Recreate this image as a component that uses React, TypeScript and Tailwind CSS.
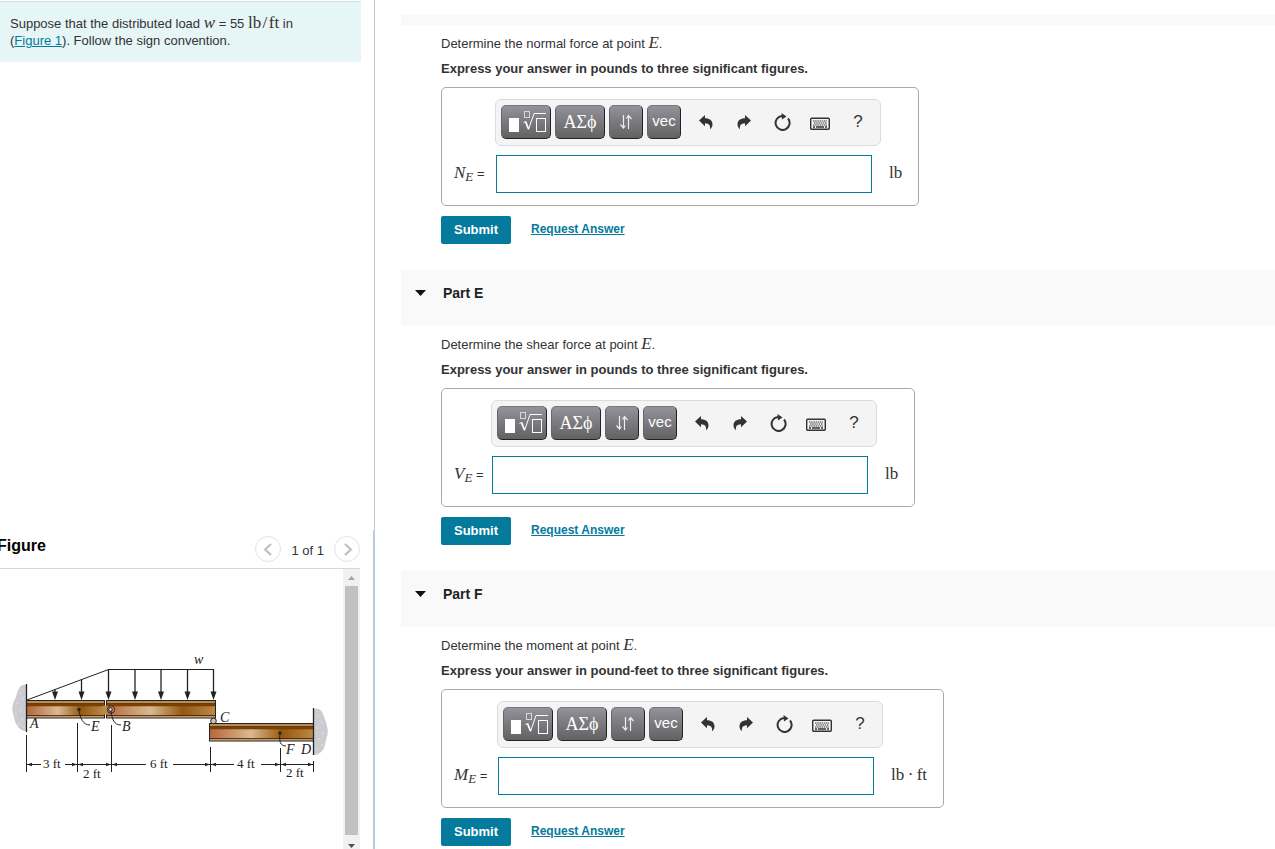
import { useState } from 'react';
import type { ReactNode } from 'react';

interface Part {
  id: string;
  title: string;
  quantity: string;
  units: string;
  symbol: string;
  unit: string;
  labelWidth: string;
}

const PARTS: Part[] = [
  {
    id: 'd',
    title: '',
    quantity: 'normal force',
    units: 'pounds',
    symbol: 'N',
    unit: 'lb',
    labelWidth: 'w-[41px]',
  },
  {
    id: 'e',
    title: 'Part E',
    quantity: 'shear force',
    units: 'pounds',
    symbol: 'V',
    unit: 'lb',
    labelWidth: 'w-[37px]',
  },
  {
    id: 'f',
    title: 'Part F',
    quantity: 'moment',
    units: 'pound-feet',
    symbol: 'M',
    unit: 'lb\u2009·\u2009ft',
    labelWidth: 'w-[43px]',
  },
];

export default function App() {
  return (
    <div className="flex h-screen overflow-hidden bg-white font-['Liberation_Sans',Arial,sans-serif] text-[13px] text-[#333]">
      <aside className="flex w-[375px] shrink-0 flex-col">
        <div className="flex-1 border-r border-[#b9cbdc] pt-px">
          <ProblemStatement />
        </div>
        <FigurePanel />
      </aside>
      <main className="min-w-0 flex-1 pt-[15px] pl-[26px]">
        {PARTS.map((p) => (
          <PartSection key={p.id} part={p} />
        ))}
      </main>
    </div>
  );
}

function MathText({ children }: { children: ReactNode }) {
  return <span className="font-['Liberation_Serif',serif] text-[17px] leading-none">{children}</span>;
}

function ProblemStatement() {
  return (
    <div className="mr-[13px] border-t border-[#d5dfe0] bg-[#e6f5f6] px-[10px] pt-[12px] pb-[13px] leading-[17px]">
      Suppose that the distributed load{' '}
      <MathText>
        <i>w</i>
      </MathText>{' '}
      = 55 <MathText>lb{'\u200a/\u200a'}ft</MathText> in
      <br />(
      <a href="#figure" className="text-[#047a9c] underline">
        Figure 1
      </a>
      ). Follow the sign convention.
    </div>
  );
}

function FigurePanel() {
  return (
    <section
      id="figure"
      className="flex h-[319px] shrink-0 flex-col border-r-2 border-[#b9cbdc] pr-[13px]"
    >
      <header className="flex h-[39px] shrink-0 items-center justify-between border-b border-[#d9d9d9]">
        <h2 className="-ml-[3px] pb-[7px] text-[16px] font-bold text-black">Figure</h2>
        <div className="flex items-center gap-[10px] text-[13px]">
          <PagerButton label="Previous figure" d="M16 8l-6 5.500 6 5.500" />
          <span className="pt-[3px]">1 of 1</span>
          <PagerButton label="Next figure" d="M11 8l6 5.500-6 5.500" />
        </div>
      </header>
      <div className="flex min-h-0 flex-1">
        <div className="min-w-0 flex-1 overflow-hidden">
          <BeamDiagram />
        </div>
        <div className="flex w-[17px] flex-col items-center bg-[#f1f1f1]">
          <svg className="h-[17px] w-[17px] shrink-0" viewBox="0 0 17 17" aria-hidden="true">
            <path d="M5 11h7L8.500 7z" fill="#a3a3a3" />
          </svg>
          <div className="w-[13px] flex-1 bg-[#c1c1c1]" />
          <svg className="h-[14px] w-[17px] shrink-0" viewBox="0 0 17 14" aria-hidden="true">
            <path d="M5 9h7l-3.500 4z" fill="#505050" />
          </svg>
        </div>
      </div>
    </section>
  );
}

function PagerButton({ label, d }: { label: string; d: string }) {
  return (
    <button aria-label={label} className="h-[26px] w-[26px] rounded-full border border-[#e3e3e3]">
      <svg viewBox="1 1 24 24" className="h-[24px] w-[24px]" fill="none" stroke="#bdbdbd" strokeWidth="2">
        <path d={d} />
      </svg>
    </button>
  );
}

const LOAD_ARROWS = [
  [55, 689],
  [81.5, 679],
  [108.5, 669],
  [135, 669],
  [161, 669],
  [187.5, 669],
  [213.5, 669],
];

// [start, end, arrow at start, arrow at end]
const DIMENSIONS: [number, number, boolean, boolean][] = [
  [27, 41, true, false],
  [65, 77, false, true],
  [78, 111, true, true],
  [112, 146, true, false],
  [173, 210, false, true],
  [211, 234, true, false],
  [261, 280, false, true],
  [281, 313, true, true],
];

const TICKS = [
  [26.5, 735],
  [77.5, 723],
  [111.5, 725],
  [210.5, 747],
  [280.5, 748],
  [313.5, 761],
];

const SPECKS = [
  [20, 693],
  [23, 699],
  [17, 703],
  [21, 710],
  [16, 714],
  [22, 719],
  [19, 724],
  [24, 727],
  [318, 716],
  [322, 722],
  [317, 728],
  [323, 733],
  [319, 739],
  [322, 745],
  [317, 749],
];

function Beam({ x, y, width }: { x: number; y: number; width: number }) {
  return (
    <g>
      <rect x={x} y={y} width={width} height="18.500" fill="#2b211b" />
      <rect x={x + 1} y={y + 1} width={width - 2} height="2.200" fill="#b58c62" />
      <rect x={x + 1} y={y + 3.2} width={width - 2} height="3" fill="#7b3f00" />
      <rect x={x + 1} y={y + 6.2} width={width - 2} height="9" fill="url(#wood)" />
      <rect x={x + 1} y={y + 16} width={width - 2} height="1.600" fill="#c39a6c" />
    </g>
  );
}

function BeamDiagram() {
  return (
    <svg
      viewBox="0 569 343 280"
      className="h-[280px] w-[343px]"
      role="img"
      aria-label="Compound beam with distributed load w"
    >
      <defs>
        <linearGradient id="wood">
          <stop offset="0" stopColor="#b5683c" />
          <stop offset="0.400" stopColor="#dab98f" />
          <stop offset="0.700" stopColor="#95590f" />
          <stop offset="1" stopColor="#bd8746" />
        </linearGradient>
      </defs>

      <path
        d="M26 685c-4-1-7 2-8 6-2 4-2 7-4 10-2 4-2 9-1 13 2 4 1 8 4 11 2 4 5 6 9 6z"
        fill="#cbccd0"
      />
      <path
        d="M314 709c4-1 8 1 9 5 1 4 4 8 4 13 2 5 0 9-1 13-1 5-2 10-5 12-2 2-4 3-7 3z"
        fill="#cbccd0"
      />
      {SPECKS.map(([x, y]) => (
        <circle key={`${x}-${y}`} cx={x} cy={y} r="0.700" fill="#eeeef0" />
      ))}

      <Beam x={26} y={700} width={79} />
      <Beam x={106} y={700} width={110} />
      <Beam x={209} y={723} width={105} />
      <path d="M103 705.500h5v9h-5z" fill="#bd8746" />
      <path d="M26.500 684v48M313.500 708v47" stroke="#222" strokeWidth="1.300" />

      <circle cx="111" cy="709.500" r="3.700" fill="#b98250" stroke="#3a2d22" />
      <circle cx="110.500" cy="709.500" r="1.700" fill="#e4e4e4" stroke="#222" />
      <circle cx="213.500" cy="721" r="2.800" fill="#c9c9cd" stroke="#222" />
      <circle cx="79" cy="709.500" r="1.700" fill="#222" />
      <circle cx="280" cy="733" r="1.700" fill="#222" />

      <g fill="none" stroke="#222">
        <path d="M27 700L108.500 669.500H213.500" />
        <path d="M79 710c1 8 4 15 11 15M111 711c1 8 3 14 10 14M280 733c-1 8 0 13 6 13" />
        {LOAD_ARROWS.map(([x, y]) => (
          <path key={x} d={`M${x} ${y}V694`} strokeWidth="1.300" />
        ))}
        {TICKS.map(([x, y]) => (
          <path key={x} d={`M${x} ${y}V772`} />
        ))}
        {DIMENSIONS.map(([a, b]) => (
          <path key={a} d={`M${a} 764.500H${b}`} />
        ))}
      </g>
      <g fill="#222">
        {LOAD_ARROWS.map(([x]) => (
          <path key={x} d={`M${x - 3} 691.500h6L${x} 700z`} />
        ))}
        {DIMENSIONS.map(([a, b, start, end]) => (
          <g key={a}>
            {start && <path d={`M${a} 764.500l5-1.700v3.400z`} />}
            {end && <path d={`M${b} 764.500l-5-1.700v3.400z`} />}
          </g>
        ))}
      </g>

      <g className="font-['Liberation_Serif',serif] text-[14px] italic" fill="#222">
        <text x="30" y="728">A</text>
        <text x="91" y="731">E</text>
        <text x="122" y="731">B</text>
        <text x="220" y="722">C</text>
        <text x="286" y="754">F</text>
        <text x="301" y="754">D</text>
        <text x="194" y="664">w</text>
      </g>
      <g className="font-['Liberation_Serif',serif] text-[13px]" fill="#222">
        <text x="43" y="768">3 ft</text>
        <text x="83" y="778">2 ft</text>
        <text x="150" y="768">6 ft</text>
        <text x="237" y="768">4 ft</text>
        <text x="286" y="777">2 ft</text>
      </g>
    </svg>
  );
}

function PartSection({ part }: { part: Part }) {
  const [open, setOpen] = useState(true);

  return (
    <section>
      {part.title ? (
        <h2 className="flex h-[56px] items-start bg-[#f9f9f9] pt-[13px] pl-[14px]">
          <button
            onClick={() => setOpen(!open)}
            aria-expanded={open}
            className="flex items-center gap-[17px] text-[14px] leading-[20px] font-bold text-[#222]"
          >
            <svg viewBox="0 0 11 6" className="h-[6px] w-[11px]" aria-hidden="true">
              <path d="M0 0h11L5.500 6z" fill="#111" />
            </svg>
            {part.title}
          </button>
        </h2>
      ) : (
        <div className="h-[10px] bg-[#f9f9f9]" />
      )}
      {open && (
        <div className="pt-[9px] pb-[26px] pl-[40px]">
          <p className="leading-[20px]">
            Determine the {part.quantity} at point{' '}
            <MathText>
              <i>E</i>
            </MathText>
            .
          </p>
          <p className="mt-[5px] leading-[20px] font-bold">
            Express your answer in {part.units} to three significant figures.
          </p>
          <AnswerBox part={part} />
          <div className="mt-[10px] flex items-center gap-[20px]">
            <button className="h-[28px] w-[70px] rounded-[2px] bg-[#047a9c] text-[13px] font-bold text-white">
              Submit
            </button>
            <a href="#request" className="pb-[2px] text-[12px] font-bold text-[#047a9c] underline">
              Request Answer
            </a>
          </div>
        </div>
      )}
    </section>
  );
}

function AnswerBox({ part }: { part: Part }) {
  const inputId = `answer-${part.id}`;

  return (
    <div className="mt-[8px] flex w-fit items-end rounded-[5px] border border-[#a9a9a9] pt-[11px] pr-[16px] pb-[12px] pl-[12px]">
      <label htmlFor={inputId} className={`${part.labelWidth} shrink-0 pb-[9px] leading-[20px]`}>
        <MathText>
          <i>
            {part.symbol}
            <sub className="text-[13px]">E</sub>
          </i>
        </MathText>{' '}
        =
      </label>
      <div className="flex flex-col gap-[9px]">
        <Toolbar />
        <input
          id={inputId}
          type="text"
          className="ml-px h-[38px] w-[376px] border border-[#047a9c] bg-white px-2 text-[16px] outline-none"
        />
      </div>
      <span className="pb-[9px] pl-[8px] leading-[20px]">
        <MathText>{part.unit}</MathText>
      </span>
    </div>
  );
}

function DarkButton({ label, wide, children }: { label: string; wide?: boolean; children: ReactNode }) {
  return (
    <button
      aria-label={label}
      className={`${wide ? 'w-[50px]' : 'w-[34px]'} flex h-[34px] items-center justify-center rounded-[5px] border border-t-[#77777b] border-r-[#222] border-b-[#222] border-l-[#66666a] bg-linear-to-b from-[#94929b] to-[#626262] text-white`}
    >
      {children}
    </button>
  );
}

function IconButton({ label, children }: { label: string; children: ReactNode }) {
  return (
    <button
      aria-label={label}
      className="flex h-[34px] w-[38px] shrink-0 items-center justify-center text-[#333]"
    >
      {children}
    </button>
  );
}

function Toolbar() {
  return (
    <div className="flex h-[47px] w-[386px] items-start rounded-[6px] border border-[#dcdcdc] bg-[#f4f4f4] py-[5px] pl-[5px]">
      <div className="mr-[6px] flex shrink-0 gap-[4px]">
        <DarkButton label="Templates" wide>
          <svg viewBox="0 0 40 24" className="h-[24px] w-[40px]" fill="none" stroke="#fff">
            <rect x="3" y="8" width="10" height="14" fill="#fff" stroke="none" />
            <rect x="18.500" y="1.500" width="5" height="6" stroke="#d8d8d8" />
            <path d="M17.500 12.500l2-1" />
            <path d="M19.500 11.500l3 7.500" strokeWidth="1.800" />
            <path d="M22.500 19.500L28 3.500H40" />
            <rect x="30.500" y="8.500" width="9" height="13" />
          </svg>
        </DarkButton>
        <DarkButton label="Symbols" wide>
          <span className="font-['Liberation_Serif',serif] text-[18px]">ΑΣϕ</span>
        </DarkButton>
        <DarkButton label="Subscript and superscript">
          <svg viewBox="0 0 14 16" className="h-[16px] w-[14px]" fill="none" stroke="#eee" strokeWidth="1.200">
            <path d="M4.500 1v13M1.500 10.500l3 3.500 2-2.500M9.500 15V2M7.500 4.500l2-3 3 3.500" />
          </svg>
        </DarkButton>
        <DarkButton label="Vector">
          <span className="pb-[2px] text-[15px]">vec</span>
        </DarkButton>
      </div>
      <IconButton label="Undo">
        <svg viewBox="0 0 14 16" className="h-[16px] w-[14px]" fill="currentColor">
          <path d="M0 6.500L6 1v3.300c4.500 0 7.500 2.200 7.500 6 0 2-.8 3.700-2.500 5 .6-3.900-.9-6-5-6.100v3z" />
        </svg>
      </IconButton>
      <IconButton label="Redo">
        <svg viewBox="0 0 14 16" className="h-[16px] w-[14px]" fill="currentColor">
          <path d="M14 6.500L8 1v3.300c-4.500 0-7.500 2.200-7.500 6 0 2 .8 3.700 2.500 5-.6-3.900.9-6 5-6.100v3z" />
        </svg>
      </IconButton>
      <IconButton label="Reset">
        <svg viewBox="0 0 17 18" className="h-[18px] w-[17px]">
          <path d="M8 3A7 7 0 1 0 14 5.500" fill="none" stroke="currentColor" strokeWidth="2" />
          <path d="M7.500 0l5 3.500-4.500 3z" fill="currentColor" />
        </svg>
      </IconButton>
      <IconButton label="Keyboard">
        <svg viewBox="0 0 20 16" className="h-[16px] w-[20px]" fill="none" stroke="currentColor">
          <rect x="0.700" y="4.200" width="18.600" height="11" rx="1" strokeWidth="1.400" />
          <path d="M3 7h14M4 9h13M3 11h14" strokeDasharray="1.500 0.700" />
          <path d="M3 13h2M6 13h8M15 13h2" strokeWidth="1.300" />
        </svg>
      </IconButton>
      <IconButton label="Help">
        <span className="text-[17px]">?</span>
      </IconButton>
    </div>
  );
}
